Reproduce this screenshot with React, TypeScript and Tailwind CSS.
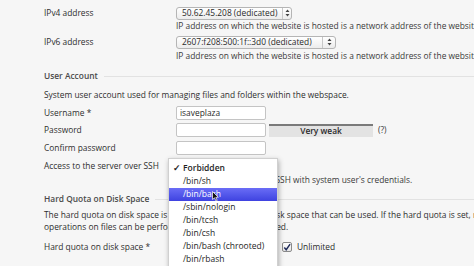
import React from 'react';

const Select = ({ value, width }: { value: string; width: string }) => (
  <div className={`flex h-[13px] items-center rounded-[3px] border border-[#b5b5b5] bg-gradient-to-b from-white to-[#ececec] ${width}`}>
    <span className="flex-1 px-[5px] text-[#2a2a2a] whitespace-nowrap">{value}</span>
    <span className="flex h-full w-[13px] items-center justify-center border-l border-[#c8c8c8]">
      <svg width="5" height="8" viewBox="0 0 5 8">
        <path d="M2.5 0.5 L4.5 3 H0.5 Z M2.5 7.5 L4.5 5 H0.5 Z" fill="#444" />
      </svg>
    </span>
  </div>
);

const Input = ({ value = '' }: { value?: string }) => (
  <div className="flex h-[14px] w-[90px] items-center rounded-[2px] border border-[#c4c4c4] bg-white px-[3px] text-[#2a2a2a]">
    {value}
  </div>
);

const SectionHeader = ({ title }: { title: string }) => (
  <div className="flex h-[14px] items-center gap-[6px]">
    <span className="font-semibold text-[#4a4a4a] whitespace-nowrap">{title}</span>
    <span className="flex-1 border-t border-[#e2e2e2]" />
  </div>
);

const Row = ({ label, children }: { label: string; children?: React.ReactNode }) => (
  <div className="grid h-[14px] grid-cols-[132px_1fr] items-center">
    <span className="text-[#2e2e2e] whitespace-nowrap">{label}</span>
    <div className="flex items-center">{children}</div>
  </div>
);

const Hint = ({ children, h = 'h-[14px]' }: { children: React.ReactNode; h?: string }) => (
  <div className={`grid grid-cols-[132px_1fr] items-center ${h}`}>
    <span />
    <span className="text-[#3a3a3a] whitespace-nowrap">{children}</span>
  </div>
);

const shells = ['Forbidden', '/bin/sh', '/bin/bash', '/sbin/nologin', '/bin/tcsh', '/bin/csh', '/bin/bash (chrooted)', '/bin/rbash'];

export default function App() {
  return (
    <div className="relative h-[266px] w-[474px] overflow-hidden bg-[#f6f6f6] font-['Open_Sans',sans-serif] text-[8.4px] leading-none">
      <div className="w-[660px] pl-[44px] pt-[6px]">
        <Row label="IPv4 address">
          <Select value="50.62.45.208 (dedicated)" width="w-[116px]" />
        </Row>
        <Hint h="h-[13px]">IP address on which the website is hosted is a network address of the website.</Hint>
        <div className="mt-[2px]">
          <Row label="IPv6 address">
            <Select value="2607:f208:500:1f::3d0 (dedicated)" width="w-[160px]" />
          </Row>
        </div>
        <Hint>IP address on which the website is hosted is a network address of the website.</Hint>

        <div className="mt-[6px]">
          <SectionHeader title="User Account" />
        </div>
        <div className="mt-[5px] flex h-[14px] items-center text-[#2e2e2e]">
          System user account used for managing files and folders within the webspace.
        </div>

        <div className="mt-[4px]">
          <Row label="Username *">
            <Input value="isaveplaza" />
          </Row>
        </div>
        <div className="mt-[3px]">
          <Row label="Password">
            <Input />
            <div className="ml-[3px] flex h-[13px] w-[104px] items-center justify-center border-t-2 border-[#7a7a7a] bg-[#e3e3e3] font-semibold text-[#2a2a2a]">
              Very weak
            </div>
            <span className="ml-[5px] text-[#3a3a3a]">(?)</span>
          </Row>
        </div>
        <div className="mt-[4px]">
          <Row label="Confirm password">
            <Input />
          </Row>
        </div>
        <div className="mt-[4px]">
          <Row label="Access to the server over SSH">
            <Select value="Forbidden" width="w-[100px]" />
          </Row>
        </div>
        <Hint>Access to the server over SSH with system user's credentials.</Hint>

        <div className="mt-[5px]">
          <SectionHeader title="Hard Quota on Disk Space" />
        </div>
        <div className="mt-[3px] text-[#2e2e2e] leading-[12px]">
          <div className="whitespace-nowrap">
            The hard quota on disk space is the maximum amount of disk space that can be used. If the hard quota is set, no write
          </div>
          <div className="whitespace-nowrap">operations on files can be performed after the limit is reached.</div>
        </div>
        <div className="mt-[7px]">
          <Row label="Hard quota on disk space *">
            <Input />
            <span className="ml-[16px] flex h-[10px] w-[10px] items-center justify-center rounded-[2px] border border-[#8a8a8a] bg-gradient-to-b from-white to-[#e6e6e6]">
              <svg width="9" height="9" viewBox="0 0 9 9">
                <path d="M1.5 4.5 L3.6 7 L8 0.8" stroke="#1e2a5a" strokeWidth="1.6" fill="none" />
              </svg>
            </span>
            <span className="ml-[5px] text-[#2a2a2a]">Unlimited</span>
          </Row>
        </div>
      </div>

      {/* open shell menu */}
      <div className="absolute left-[168px] top-[158px] w-[110px] border border-[#d0d0d0] bg-white pt-[3px] pb-[6px] shadow-[1px_2px_5px_rgba(0,0,0,0.3)]">
        {shells.map((s, i) => (
          <div
            key={s}
            className={`flex h-[13px] items-center text-[8.5px] ${i === 2 ? 'bg-gradient-to-b from-[#6a6cf6] to-[#3f42e0] text-white' : 'text-[#1e1e1e]'}`}
          >
            <span className="w-[14px] pl-[4px] font-semibold">{i === 0 ? '✓' : ''}</span>
            <span className={i === 0 ? 'font-semibold' : ''}>{s}</span>
          </div>
        ))}
      </div>
      <svg className="absolute left-[212px] top-[191px]" width="7" height="11" viewBox="0 0 7 11">
        <path d="M0.5 0.5 V8.5 L2.5 6.8 L4 10 L5.2 9.4 L3.8 6.3 H6.3 Z" fill="#111" stroke="#fff" strokeWidth="0.7" />
      </svg>
    </div>
  );
}
